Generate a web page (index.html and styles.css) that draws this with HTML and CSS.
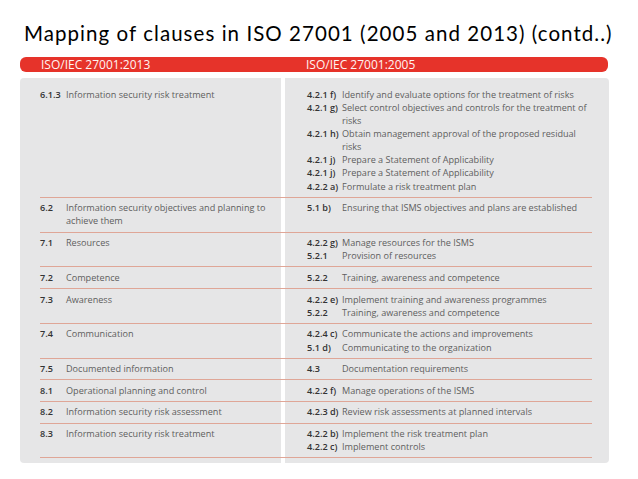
FILE: index.html
```html
<!DOCTYPE html>
<html lang="en">
<head>
<meta charset="utf-8">
<title>Mapping of clauses in ISO 27001</title>
<link rel="stylesheet" href="styles.css">
</head>
<body>
<h1 class="title">Mapping of clauses in ISO 27001 (2005 and 2013) (contd..)</h1>
<div class="sheet">
  <div class="head"><span>ISO/IEC 27001:2013</span><span>ISO/IEC 27001:2005</span></div>
  <div class="panels">
    <div class="row">
      <div class="num">6.1.3</div><div class="txt">Information security risk treatment</div>
      <div class="refs">
        <span class="code">4.2.1 f)</span><span class="desc">Identify and evaluate options for the treatment of risks</span>
        <span class="code">4.2.1 g)</span><span class="desc">Select control objectives and controls for the treatment of<br>risks</span>
        <span class="code">4.2.1 h)</span><span class="desc">Obtain management approval of the proposed residual<br>risks</span>
        <span class="code">4.2.1 j)</span><span class="desc">Prepare a Statement of Applicability</span>
        <span class="code">4.2.1 j)</span><span class="desc">Prepare a Statement of Applicability</span>
        <span class="code">4.2.2 a)</span><span class="desc">Formulate a risk treatment plan</span>
      </div>
    </div>
    <div class="row">
      <div class="num">6.2</div><div class="txt">Information security objectives and planning to<br>achieve them</div>
      <div class="refs">
        <span class="code">5.1 b)</span><span class="desc">Ensuring that ISMS objectives and plans are established</span>
      </div>
    </div>
    <div class="row">
      <div class="num">7.1</div><div class="txt">Resources</div>
      <div class="refs">
        <span class="code">4.2.2 g)</span><span class="desc">Manage resources for the ISMS</span>
        <span class="code">5.2.1</span><span class="desc">Provision of resources</span>
      </div>
    </div>
    <div class="row">
      <div class="num">7.2</div><div class="txt">Competence</div>
      <div class="refs">
        <span class="code">5.2.2</span><span class="desc">Training, awareness and competence</span>
      </div>
    </div>
    <div class="row">
      <div class="num">7.3</div><div class="txt">Awareness</div>
      <div class="refs">
        <span class="code">4.2.2 e)</span><span class="desc">Implement training and awareness programmes</span>
        <span class="code">5.2.2</span><span class="desc">Training, awareness and competence</span>
      </div>
    </div>
    <div class="row">
      <div class="num">7.4</div><div class="txt">Communication</div>
      <div class="refs">
        <span class="code">4.2.4 c)</span><span class="desc">Communicate the actions and improvements</span>
        <span class="code">5.1 d)</span><span class="desc">Communicating to the organization</span>
      </div>
    </div>
    <div class="row">
      <div class="num">7.5</div><div class="txt">Documented information</div>
      <div class="refs">
        <span class="code">4.3</span><span class="desc">Documentation requirements</span>
      </div>
    </div>
    <div class="row">
      <div class="num">8.1</div><div class="txt">Operational planning and control</div>
      <div class="refs">
        <span class="code">4.2.2 f)</span><span class="desc">Manage operations of the ISMS</span>
      </div>
    </div>
    <div class="row">
      <div class="num">8.2</div><div class="txt">Information security risk assessment</div>
      <div class="refs">
        <span class="code">4.2.3 d)</span><span class="desc">Review risk assessments at planned intervals</span>
      </div>
    </div>
    <div class="row">
      <div class="num">8.3</div><div class="txt">Information security risk treatment</div>
      <div class="refs">
        <span class="code">4.2.2 b)</span><span class="desc">Implement the risk treatment plan</span>
        <span class="code">4.2.2 c)</span><span class="desc">Implement controls</span>
      </div>
    </div>
  </div>
</div>
</body>
</html>
```
FILE: styles.css
```css
html, body {
  margin: 0;
  padding: 0;
  background: #ffffff;
}

.title {
  margin: 0;
  padding: 20px 0 0 24px;
  font-family: Lato, "Open Sans", sans-serif;
  font-weight: 400;
  font-size: 20.5px;
  letter-spacing: 1.05px;
  line-height: 26px;
  color: #000000;
  white-space: nowrap;
}

.sheet {
  margin: 11px 0 0 20px;
  width: 589px;
}

.head {
  width: 588px;
  height: 15px;
  box-sizing: border-box;
  padding-left: 21px;
  display: grid;
  grid-template-columns: 265px 1fr;
  background: #e6332a;
  border-radius: 6px;
  color: #fff4f2;
  font-family: "Open Sans", sans-serif;
  font-size: 12px;
  line-height: 15px;
  font-weight: 400;
  white-space: nowrap;
}

.panels {
  margin-top: 6px;
  padding: 6px 17px 4.5px 20px;
  background: linear-gradient(to right, #e6e6e7 0, #e6e6e7 261px, #ffffff 261px, #ffffff 265px, #e6e6e7 265px);
  border-radius: 4px;
  font-family: "Open Sans", sans-serif;
  font-size: 9.1px;
  line-height: 13.15px;
  color: #5e5e5e;
}

.row {
  display: grid;
  grid-template-columns: 26px 241px 1fr;
  padding: 3.5px 0 4px;
  border-bottom: 1.5px solid #dfa697;
}

.num,
.code {
  color: #333333;
  font-weight: 600;
}

.refs {
  display: grid;
  grid-template-columns: 35px 1fr;
}

.txt,
.desc,
.code {
  white-space: nowrap;
}
```
